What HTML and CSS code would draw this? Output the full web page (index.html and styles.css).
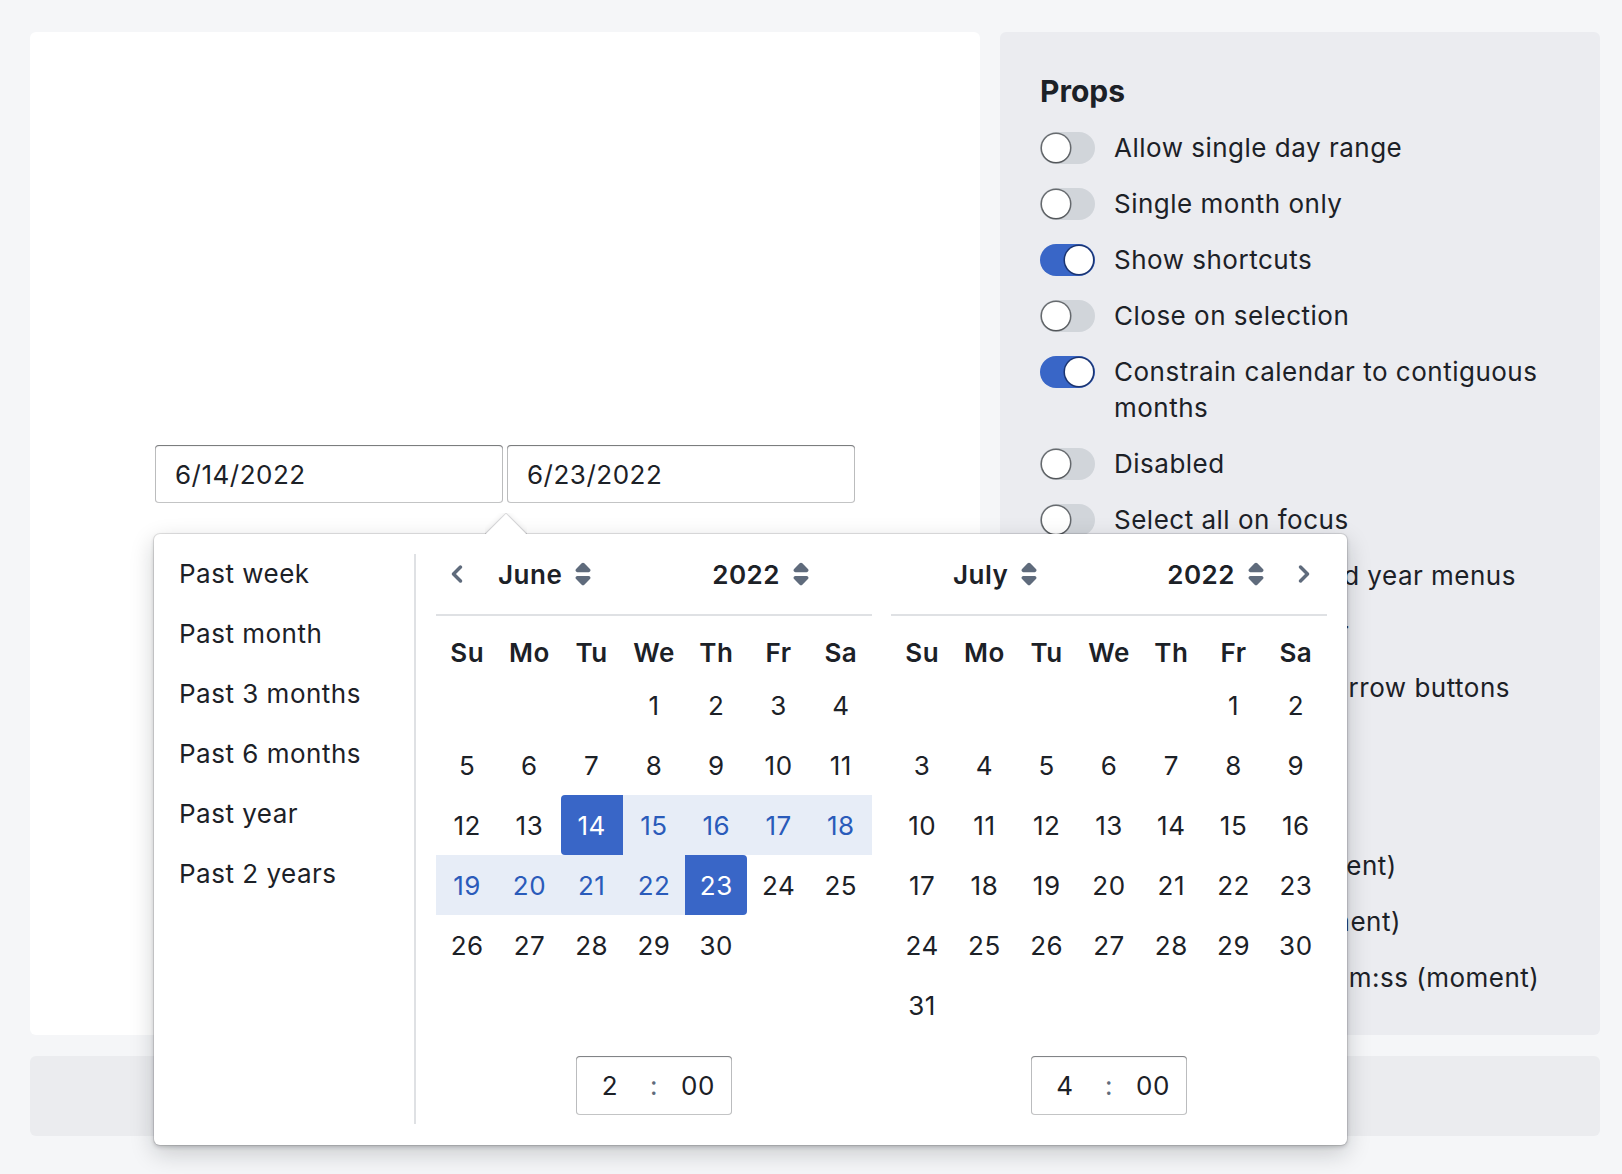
FILE: index.html
```html
<!DOCTYPE html>
<html lang="en">
<head>
    <meta charset="UTF-8">
    <meta name="viewport" content="width=device-width, initial-scale=1.0">
    <title>DateRangeInput</title>
    <link rel="stylesheet" href="styles.css">
</head>
<body>
<div class="page">
    <!-- Example area -->
    <div class="example">
        <div class="range-input">
            <div class="inputs">
                <input class="date-input" type="text" value="6/14/2022">
                <input class="date-input" type="text" value="6/23/2022">
            </div>

            <!-- Open popover with shortcuts and two calendars -->
            <div class="popover">
                <div class="popover-arrow"><span></span></div>
                <div class="popover-body">
                    <ul class="shortcuts">
                        <li>Past week</li>
                        <li>Past month</li>
                        <li>Past 3 months</li>
                        <li>Past 6 months</li>
                        <li>Past year</li>
                        <li>Past 2 years</li>
                    </ul>
                    <div class="pickers">
                        <div class="calendars">
                            <div class="calendar">
                                <div class="caption">
                                    <button class="nav-btn prev">
                                        <svg viewBox="0 0 16 16" width="28" height="28"><path d="M7.41 8l3.29-3.29c.19-.18.3-.43.3-.71a1.003 1.003 0 00-1.71-.71l-4 4C5.11 7.47 5 7.72 5 8c0 .28.11.53.29.71l4 4a1.003 1.003 0 001.42-1.42L7.41 8z"/></svg>
                                    </button>
                                    <span class="select">June
                                        <svg viewBox="0 0 16 16" width="30" height="30"><path d="M5 7h6c.55 0 1-.45 1-1 0-.28-.11-.53-.29-.71l-3-3C8.53 2.11 8.28 2 8 2s-.53.11-.71.29l-3 3A1.003 1.003 0 005 7zm6 2H5c-.55 0-1 .45-1 1 0 .28.11.53.29.71l3 3c.18.18.43.29.71.29s.53-.11.71-.29l3-3c.18-.18.29-.43.29-.71 0-.55-.45-1-1-1z"/></svg>
                                    </span>
                                    <span class="select">2022
                                        <svg viewBox="0 0 16 16" width="30" height="30"><path d="M5 7h6c.55 0 1-.45 1-1 0-.28-.11-.53-.29-.71l-3-3C8.53 2.11 8.28 2 8 2s-.53.11-.71.29l-3 3A1.003 1.003 0 005 7zm6 2H5c-.55 0-1 .45-1 1 0 .28.11.53.29.71l3 3c.18.18.43.29.71.29s.53-.11.71-.29l3-3c.18-.18.29-.43.29-.71 0-.55-.45-1-1-1z"/></svg>
                                    </span>
                                </div>
                                <div class="weekdays">
                                    <span>Su</span><span>Mo</span><span>Tu</span><span>We</span><span>Th</span><span>Fr</span><span>Sa</span>
                                </div>
                                <div class="days">
                                    <span></span><span></span><span></span><span>1</span><span>2</span><span>3</span><span>4</span>
                                    <span>5</span><span>6</span><span>7</span><span>8</span><span>9</span><span>10</span><span>11</span>
                                    <span>12</span><span>13</span><span class="start">14</span><span class="mid">15</span><span class="mid">16</span><span class="mid">17</span><span class="mid">18</span>
                                    <span class="mid">19</span><span class="mid">20</span><span class="mid">21</span><span class="mid">22</span><span class="end">23</span><span>24</span><span>25</span>
                                    <span>26</span><span>27</span><span>28</span><span>29</span><span>30</span>
                                </div>
                            </div>

                            <div class="calendar">
                                <div class="caption">
                                    <span class="select">July
                                        <svg viewBox="0 0 16 16" width="30" height="30"><path d="M5 7h6c.55 0 1-.45 1-1 0-.28-.11-.53-.29-.71l-3-3C8.53 2.11 8.28 2 8 2s-.53.11-.71.29l-3 3A1.003 1.003 0 005 7zm6 2H5c-.55 0-1 .45-1 1 0 .28.11.53.29.71l3 3c.18.18.43.29.71.29s.53-.11.71-.29l3-3c.18-.18.29-.43.29-.71 0-.55-.45-1-1-1z"/></svg>
                                    </span>
                                    <span class="select">2022
                                        <svg viewBox="0 0 16 16" width="30" height="30"><path d="M5 7h6c.55 0 1-.45 1-1 0-.28-.11-.53-.29-.71l-3-3C8.53 2.11 8.28 2 8 2s-.53.11-.71.29l-3 3A1.003 1.003 0 005 7zm6 2H5c-.55 0-1 .45-1 1 0 .28.11.53.29.71l3 3c.18.18.43.29.71.29s.53-.11.71-.29l3-3c.18-.18.29-.43.29-.71 0-.55-.45-1-1-1z"/></svg>
                                    </span>
                                    <button class="nav-btn next">
                                        <svg viewBox="0 0 16 16" width="28" height="28"><path d="M10.71 7.29l-4-4a1.003 1.003 0 00-1.42 1.42L8.59 8 5.3 11.29c-.19.18-.3.43-.3.71a1.003 1.003 0 001.71.71l4-4c.18-.18.29-.43.29-.71 0-.28-.11-.53-.29-.71z"/></svg>
                                    </button>
                                </div>
                                <div class="weekdays">
                                    <span>Su</span><span>Mo</span><span>Tu</span><span>We</span><span>Th</span><span>Fr</span><span>Sa</span>
                                </div>
                                <div class="days">
                                    <span></span><span></span><span></span><span></span><span></span><span>1</span><span>2</span>
                                    <span>3</span><span>4</span><span>5</span><span>6</span><span>7</span><span>8</span><span>9</span>
                                    <span>10</span><span>11</span><span>12</span><span>13</span><span>14</span><span>15</span><span>16</span>
                                    <span>17</span><span>18</span><span>19</span><span>20</span><span>21</span><span>22</span><span>23</span>
                                    <span>24</span><span>25</span><span>26</span><span>27</span><span>28</span><span>29</span><span>30</span>
                                    <span>31</span>
                                </div>
                            </div>
                        </div>

                        <div class="timepickers">
                            <div class="tp-cell">
                                <div class="timepicker"><span class="tp-part">2</span><span class="tp-sep">:</span><span class="tp-part">00</span></div>
                            </div>
                            <div class="tp-cell">
                                <div class="timepicker"><span class="tp-part">4</span><span class="tp-sep">:</span><span class="tp-part">00</span></div>
                            </div>
                        </div>
                    </div>
                </div>
            </div>
        </div>
    </div>

    <!-- Options panel -->
    <div class="options">
        <h5>Props</h5>
        <label class="switch"><span class="track"><span class="knob"></span></span>Allow single day range</label>
        <label class="switch"><span class="track"><span class="knob"></span></span>Single month only</label>
        <label class="switch on"><span class="track"><span class="knob"></span></span>Show shortcuts</label>
        <label class="switch"><span class="track"><span class="knob"></span></span>Close on selection</label>
        <label class="switch on"><span class="track"><span class="knob"></span></span>Constrain calendar to contiguous months</label>
        <label class="switch"><span class="track"><span class="knob"></span></span>Disabled</label>
        <label class="switch"><span class="track"><span class="knob"></span></span>Select all on focus</label>
        <label class="switch"><span class="track"><span class="knob"></span></span>Reverse month and year menus</label>
        <label class="switch"><span class="track"><span class="knob"></span></span>Enable time picker</label>
        <label class="switch"><span class="track"><span class="knob"></span></span>Show timepicker arrow buttons</label>
        <div class="group-label">Date format</div>
        <label class="radio checked"><span class="dot"></span>JS Date</label>
        <label class="radio"><span class="dot"></span>MM/DD/YYYY (moment)</label>
        <label class="radio"><span class="dot"></span>YYYY-MM-DD (moment)</label>
        <label class="radio"><span class="dot"></span>YYYY-MM-DD HH:mm:ss (moment)</label>
    </div>

    <div class="footer-bar"></div>
</div>
</body>
</html>
```

FILE: styles.css
```css
/* Base */
* {
    box-sizing: border-box;
}
body {
    margin: 0;
    background: #f5f6f8;
    color: #1c2127;
    font-family: Inter, "Noto Sans", sans-serif;
    font-size: 26px;
    letter-spacing: 0.5px;
}
.page {
    display: grid;
    grid-template-columns: 950px 600px;
    grid-template-rows: 1003px 80px;
    column-gap: 20px;
    row-gap: 21px;
    padding: 32px 0 38px 30px;
}

/* Example card */
.example {
    background: #fff;
    border-radius: 6px;
    display: flex;
    justify-content: center;
    padding-top: 413px;
}
.range-input {
    position: relative;
    height: 58px;
}
.inputs {
    display: flex;
    gap: 4px;
}
.date-input {
    width: 348px;
    height: 58px;
    border: none;
    border-radius: 4px;
    padding: 0 20px;
    font: inherit;
    letter-spacing: inherit;
    color: #1c2127;
    background: #fff;
    box-shadow: inset 0 0 0 1px rgba(17, 20, 24, 0.25), inset 0 1px 1px rgba(17, 20, 24, 0.45);
    outline: none;
}

/* Popover */
.popover {
    position: absolute;
    top: 89px;
    left: -1px;
    z-index: 10;
    background: #fff;
    border-radius: 6px;
    box-shadow: 0 0 0 1px rgba(17, 20, 24, 0.1), 0 2px 4px rgba(17, 20, 24, 0.2), 0 8px 24px rgba(17, 20, 24, 0.2);
}
.popover-arrow {
    position: absolute;
    top: -21px;
    left: 331px;
    width: 42px;
    height: 21px;
    overflow: hidden;
}
.popover-arrow span {
    position: absolute;
    left: 6px;
    top: 7px;
    width: 30px;
    height: 30px;
    background: #fff;
    transform: rotate(45deg);
    box-shadow: 0 0 0 1px rgba(17, 20, 24, 0.12), 0 0 6px rgba(17, 20, 24, 0.12);
}
.popover-body {
    display: flex;
}

.shortcuts {
    list-style: none;
    margin: 20px 0 21px;
    padding: 0 0 0 25px;
    width: 262px;
    border-right: 2px solid #dfe1e4;
}
.shortcuts li {
    height: 40px;
    line-height: 40px;
    margin-bottom: 20px;
}

.pickers {
    padding: 20px 20px 30px 20px;
}
.calendars {
    display: flex;
    align-items: flex-start;
    gap: 19px;
}
.calendar {
    width: 436px;
}
.caption {
    position: relative;
    height: 62px;
    padding: 0 56px 20px 62px;
    border-bottom: 2px solid #dfe1e4;
    display: flex;
    align-items: center;
    justify-content: space-between;
    font-weight: 600;
}
.select {
    display: flex;
    align-items: center;
    gap: 6px;
}
.select svg {
    fill: #5f6b7c;
}
.nav-btn {
    position: absolute;
    top: 0;
    width: 42px;
    height: 40px;
    border: none;
    background: none;
    padding: 0;
    display: flex;
    align-items: center;
    justify-content: center;
}
.nav-btn svg {
    fill: #5f6b7c;
}
.nav-btn.prev {
    left: 0;
}
.nav-btn.next {
    right: 2px;
}

.weekdays {
    display: grid;
    grid-template-columns: repeat(7, 1fr);
    margin-top: 14px;
    height: 45px;
    align-items: center;
    text-align: center;
    font-weight: 600;
}
.days {
    display: grid;
    grid-template-columns: repeat(7, 1fr);
    grid-auto-rows: 60px;
}
.days span {
    display: flex;
    align-items: center;
    justify-content: center;
}
.days .mid {
    background: #e7edf7;
    color: #2a5bba;
}
.days .start,
.days .end {
    background: #3966c7;
    color: #fff;
}
.days .start {
    border-radius: 4px 0 0 4px;
}
.days .end {
    border-radius: 0 4px 4px 0;
}

.timepickers {
    display: flex;
    gap: 19px;
    margin-top: 21px;
}
.tp-cell {
    width: 436px;
    display: flex;
    justify-content: center;
}
.timepicker {
    display: flex;
    align-items: center;
    width: 156px;
    height: 59px;
    padding: 0 4px;
    border-radius: 4px;
    box-shadow: inset 0 0 0 1px rgba(17, 20, 24, 0.25), inset 0 1px 1px rgba(17, 20, 24, 0.4);
}
.tp-part {
    width: 60px;
    text-align: center;
}
.tp-sep {
    width: 28px;
    text-align: center;
    color: #5f6b7c;
}

/* Options panel */
.options {
    background: #ebecf0;
    border-radius: 6px;
    padding: 41px 40px 0;
    overflow: hidden;
}
.options h5 {
    margin: 0 0 21px;
    font-size: 30px;
    line-height: 36px;
    font-weight: 700;
    letter-spacing: 0;
}
.switch,
.radio {
    display: flex;
    align-items: flex-start;
    line-height: 36px;
    margin-bottom: 20px;
}
.track {
    position: relative;
    flex-shrink: 0;
    width: 55px;
    height: 32px;
    margin: 2px 19px 0 0;
    border-radius: 16px;
    background: #d1d5da;
}
.knob {
    position: absolute;
    top: 2px;
    left: 2px;
    width: 28px;
    height: 28px;
    border-radius: 50%;
    background: #fff;
    box-shadow: 0 0 0 1.5px rgba(17, 20, 24, 0.55), 0 1px 1px rgba(17, 20, 24, 0.3);
}
.switch.on .track {
    background: #3966c7;
}
.switch.on .knob {
    left: 25px;
    box-shadow: 0 0 0 1.5px rgba(20, 40, 90, 0.8);
}
.group-label {
    line-height: 36px;
    margin-bottom: 30px;
}
.dot {
    flex-shrink: 0;
    width: 30px;
    height: 30px;
    margin: 3px 18px 0 0;
    border-radius: 50%;
    background: #f6f7f9;
    box-shadow: inset 0 0 0 1px rgba(17, 20, 24, 0.4);
}
.radio.checked .dot {
    background: #3966c7;
}

.footer-bar {
    grid-column: 1 / -1;
    border-radius: 6px;
    background: #ebecef;
}
```
